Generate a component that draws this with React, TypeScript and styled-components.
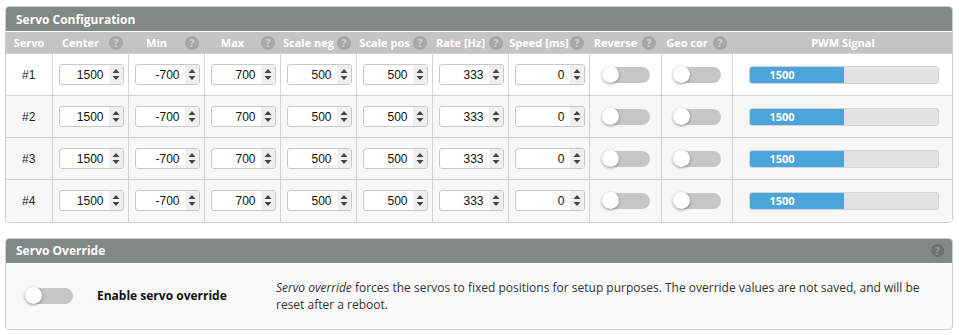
import styled, { createGlobalStyle } from 'styled-components';

const COLUMNS = [
  { label: 'Servo', width: 46, help: false },
  { label: 'Center', width: 76, help: true },
  { label: 'Min', width: 76, help: true },
  { label: 'Max', width: 76, help: true },
  { label: 'Scale neg', width: 76, help: true },
  { label: 'Scale pos', width: 76, help: true },
  { label: 'Rate [Hz]', width: 76, help: true },
  { label: 'Speed [ms]', width: 81, help: true },
  { label: 'Reverse', width: 72, help: true },
  { label: 'Geo cor', width: 71, help: true },
  { label: 'PWM Signal', width: 222, help: false },
];

const SERVOS = [1, 2, 3, 4].map((n) => ({
  name: `#${n}`,
  values: [1500, -700, 700, 500, 500, 333, 0],
  pwm: 1500,
}));

const GlobalStyle = createGlobalStyle`
  *, *::before, *::after {
    box-sizing: border-box;
  }

  body {
    margin: 0;
    background: #ffffff;
    font-family: "Open Sans", "Liberation Sans", sans-serif;
  }
`;

const Page = styled.div`
  display: flex;
  flex-direction: column;
  gap: 15px;
  width: 953px;
  padding: 6px 0 0 5px;
`;

const Panel = styled.section`
  border: 1px solid #cfcfcf;
  border-radius: 4px;
  overflow: hidden;
  background: #f9f9f9;
`;

const TitleBar = styled.div`
  display: flex;
  align-items: center;
  justify-content: space-between;
  height: 24px;
  padding: 0 8px 0 10px;
  background: #828885;
  color: #ffffff;
  font-size: 12px;
  font-weight: 700;
`;

const Table = styled.table`
  width: 100%;
  border-collapse: collapse;
  table-layout: fixed;
`;

const HeadCell = styled.th<{ $w: number }>`
  width: ${(p) => p.$w}px;
  height: 22px;
  padding: 0;
  background: #c4c4c4;
  border-top: 1px solid #ffffff;
  color: #ffffff;
  font-size: 11px;
  font-weight: 700;
`;

const HeadInner = styled.div<{ $help: boolean }>`
  display: flex;
  align-items: center;
  padding-right: ${(p) => (p.$help ? '5px' : '0')};

  span {
    flex: 1;
    text-align: center;
    white-space: nowrap;
  }
`;

const HelpIcon = styled.i<{ $size?: number; $bg?: string; $fg?: string }>`
  display: flex;
  align-items: center;
  justify-content: center;
  flex: none;
  width: ${(p) => p.$size ?? 14}px;
  height: ${(p) => p.$size ?? 14}px;
  border-radius: 50%;
  background: ${(p) => p.$bg ?? '#a6a6a6'};
  color: ${(p) => p.$fg ?? '#d6d6d6'};
  font-style: normal;
  font-size: 10px;
  font-weight: 700;
  line-height: 1;
`;

const Row = styled.tr<{ $first: boolean }>`
  background: ${(p) => (p.$first ? '#ffffff' : '#f7f7f7')};
`;

const Cell = styled.td`
  height: 42px;
  padding: 0 4px 0 6px;
  border-top: 1px solid #d3d3d3;
  border-left: 1px solid #d3d3d3;
  text-align: center;
  font-family: "Liberation Sans", Arial, sans-serif;
  font-size: 12px;
  color: #222222;

  &:first-child {
    border-left: none;
    padding: 0;
  }
`;

const NumberBox = styled.div`
  display: flex;
  height: 21px;
  border: 1px solid #c9c9c9;
  border-radius: 3px;
  background: #ffffff;
  overflow: hidden;
`;

const NumberInput = styled.input`
  flex: 1;
  min-width: 0;
  border: none;
  padding: 0 5px 0 0;
  background: transparent;
  text-align: right;
  font-family: "Liberation Sans", Arial, sans-serif;
  font-size: 12px;
  color: #111111;
  outline: none;
`;

const Spinner = styled.span`
  display: flex;
  align-items: center;
  justify-content: center;
  width: 14px;
  background: #efefef;
`;

const SpinnerIcon = () => (
  <svg width="8" height="13" viewBox="0 0 8 13" aria-hidden>
    <path d="M4 1 L7.5 5 L0.5 5 Z" fill="#444" />
    <path d="M4 12 L7.5 8 L0.5 8 Z" fill="#444" />
  </svg>
);

const Track = styled.span`
  display: inline-flex;
  align-items: center;
  width: 47px;
  height: 16px;
  border-radius: 8px;
  background: #c6c6c6;
  vertical-align: middle;
`;

const Knob = styled.span`
  width: 17px;
  height: 17px;
  margin-left: -1px;
  border-radius: 50%;
  background: #ffffff;
  box-shadow: 0 1px 3px rgba(0, 0, 0, 0.4);
`;

const PwmBar = styled.div`
  display: flex;
  height: 18px;
  margin: 0 11px 0 10px;
  border: 1px solid #d4d4d4;
  border-radius: 3px;
  background: #e2e2e2;
  overflow: hidden;
`;

const PwmFill = styled.div`
  display: flex;
  align-items: center;
  padding-left: 20px;
  background: #4aa6d8;
  color: #ffffff;
  font-family: "Open Sans", sans-serif;
  font-size: 11px;
  font-weight: 700;
`;

const OverrideBody = styled.div`
  display: flex;
  align-items: center;
  height: 66px;
  padding: 0 10px 0 20px;
`;

const OverrideLabel = styled.span`
  width: 203px;
  padding-left: 24px;
  font-size: 12px;
  font-weight: 700;
  color: #111111;
`;

const Description = styled.p`
  flex: 1;
  margin: 0;
  font-size: 12px;
  line-height: 17px;
  color: #333333;
`;

const Toggle = () => (
  <Track>
    <Knob />
  </Track>
);

export default function App() {
  return (
    <>
      <GlobalStyle />
      <Page>
        <Panel>
          <TitleBar>Servo Configuration</TitleBar>
          <Table>
            <thead>
              <tr>
                {COLUMNS.map((c) => (
                  <HeadCell key={c.label} $w={c.width}>
                    <HeadInner $help={c.help}>
                      <span>{c.label}</span>
                      {c.help && <HelpIcon>?</HelpIcon>}
                    </HeadInner>
                  </HeadCell>
                ))}
              </tr>
            </thead>
            <tbody>
              {SERVOS.map((s, i) => (
                <Row key={s.name} $first={i === 0}>
                  <Cell>{s.name}</Cell>
                  {s.values.map((v, j) => (
                    <Cell key={j}>
                      <NumberBox>
                        <NumberInput readOnly value={v} />
                        <Spinner>
                          <SpinnerIcon />
                        </Spinner>
                      </NumberBox>
                    </Cell>
                  ))}
                  <Cell>
                    <Toggle />
                  </Cell>
                  <Cell>
                    <Toggle />
                  </Cell>
                  <Cell>
                    <PwmBar>
                      <PwmFill style={{ width: `${((s.pwm - 1000) / 1000) * 100}%` }}>
                        {s.pwm}
                      </PwmFill>
                    </PwmBar>
                  </Cell>
                </Row>
              ))}
            </tbody>
          </Table>
        </Panel>
        <Panel>
          <TitleBar>
            Servo Override
            <HelpIcon $size={13} $bg="#6d716f" $fg="#9a9e9c">?</HelpIcon>
          </TitleBar>
          <OverrideBody>
            <Toggle />
            <OverrideLabel>Enable servo override</OverrideLabel>
            <Description>
              <em>Servo override</em> forces the servos to fixed positions for setup purposes. The
              override values are not saved, and will be reset after a reboot.
            </Description>
          </OverrideBody>
        </Panel>
      </Page>
    </>
  );
}
